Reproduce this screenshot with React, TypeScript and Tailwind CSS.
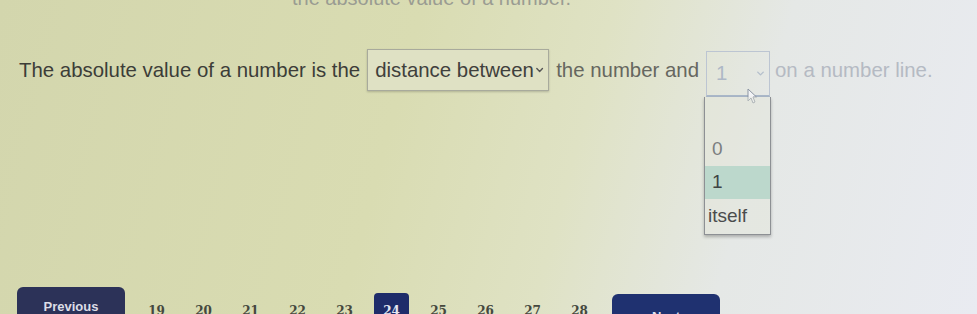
import { ChevronDown } from 'lucide-react';

const pages = [19, 20, 21, 22, 23, 24, 25, 26, 27, 28];

function Cursor() {
  return (
    <svg width="10" height="16" viewBox="0 0 10 16" className="absolute left-[40px] top-[36px]">
      <path d="M1 1 L1 13 L4 10 L6 15 L8 14 L6 9 L9.5 9 Z" fill="#f3f4f6" stroke="#8c95a3" strokeWidth="1" />
    </svg>
  );
}

export default function App() {
  return (
    <div className="w-[977px] h-[314px] overflow-hidden flex flex-col font-['Liberation_Sans',sans-serif] bg-[linear-gradient(105deg,#d3d6ad_0%,#d9dcb2_40%,#dfe2c4_58%,#e5e8e6_75%,#e9ebf1_100%)]">
      {/* previous line, cropped by the top edge */}
      <div className="h-[5px] overflow-hidden">
        <div className="-mt-[17px] pl-[292px] text-[20px] text-[#9a9c92] whitespace-nowrap">
          the absolute value of a number.
        </div>
      </div>

      <div className="mt-[44px] pl-[19px] flex items-center h-[42px] text-[20.4px] whitespace-nowrap">
        <span className="text-[#3c3d38]">The absolute value of a number is the</span>
        <div className="ml-[7px] h-[42px] w-[182px] border border-[#a8aa9c] bg-[#dfe1c4] shadow-[0_1px_2px_rgba(0,0,0,0.2)] flex items-center pl-[7px] pr-[3px] text-[#3f403c]">
          <span className="flex-1">distance between</span>
          <ChevronDown size={12} strokeWidth={3} className="text-[#555]" />
        </div>
        <span className="ml-[7px] text-[#66675f]">the number and</span>
        <div className="relative ml-[7px] w-[64px] h-[46px] mt-[8px] border-x border-t border-[#bcc5d2] border-b-2 border-b-[#a9b7c8] flex items-center pl-[9px] pr-[3px]">
          <span className="flex-1 text-[#aeb8c6]">1</span>
          <ChevronDown size={11} strokeWidth={3} className="text-[#b4bfcc]" />
          <Cursor />
          <div className="absolute left-[-3px] top-[45px] w-[67px] h-[138px] border border-[#8d9094] border-t-0 bg-[#e4e7d9]/40 shadow-[0_2px_3px_rgba(0,0,0,0.25)] flex flex-col text-[19px]">
            <div className="h-[36px]" />
            <div className="h-[33px] flex items-center pl-[7px] text-[#7b7e80]">0</div>
            <div className="h-[33px] flex items-center pl-[7px] text-[#3e4444] bg-[#bcd8cc]">1</div>
            <div className="h-[34px] flex items-center pl-[3px] text-[#4a4c4c]">itself</div>
          </div>
        </div>
        <span className="ml-[5px] text-[#b5bac3]">on a number line.</span>
      </div>

      <div className="mt-auto pl-[17px] flex items-end h-[28px] font-['DejaVu_Serif',serif] font-bold text-[12px]">
        <div className="w-[108px] h-[27px] rounded-t-[6px] bg-[#2c3258] text-[#dcdde6] flex justify-center pt-[10px] font-['Liberation_Sans',sans-serif] text-[13px]">
          Previous
        </div>
        <div className="flex items-end ml-[8px]">
          {pages.map((p) =>
            p === 24 ? (
              <div key={p} className="w-[35px] h-[21px] rounded-t-[4px] bg-[#1e2c6a] text-[#e4e6f0] flex justify-center pt-[9px] mx-[6px]">
                {p}
              </div>
            ) : (
              <div key={p} className="w-[47px] h-[12px] flex justify-center text-[#45483e]">
                {p}
              </div>
            )
          )}
        </div>
        <div className="ml-[9px] w-[108px] h-[20px] rounded-t-[6px] bg-[#1f3170] text-[#e0e3f0] flex justify-center pt-[13px] font-['Liberation_Sans',sans-serif] text-[13px]">
          Next
        </div>
      </div>
    </div>
  );
}
